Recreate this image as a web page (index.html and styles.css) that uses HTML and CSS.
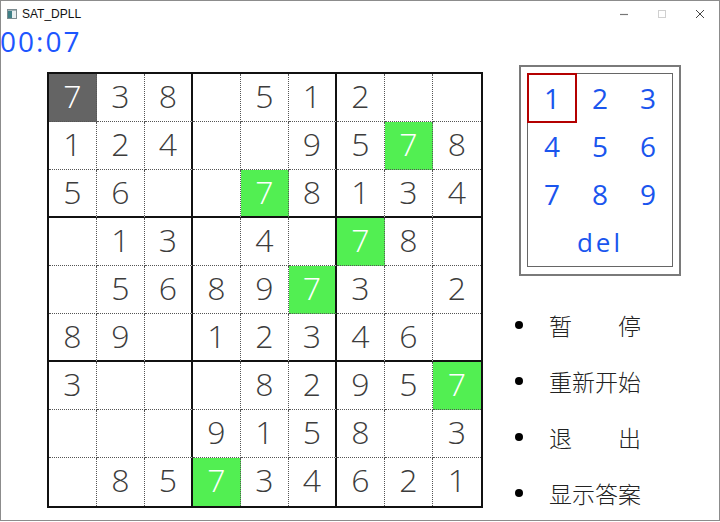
FILE: index.html
```html
<!DOCTYPE html>
<html lang="zh-CN">
<head>
  <meta charset="UTF-8" />
  <title>SAT_DPLL</title>
  <link rel="stylesheet" href="styles.css">
</head>
<body>
  <div class="window">
    <div class="titlebar">
      <svg class="app-icon" width="10" height="10" viewBox="0 0 10 10">
        <rect x="0.5" y="0.5" width="9" height="9" fill="#e8eef0" stroke="#7d8b90" />
        <rect x="1" y="2" width="4" height="7" fill="#3f7f86" />
        <rect x="1" y="1" width="8" height="1" fill="#9fb3b8" />
      </svg>
      <span class="title">SAT_DPLL</span>
      <div class="controls">
        <svg width="10" height="10" viewBox="0 0 10 10"><path d="M1 5.5h8" stroke="#777" stroke-width="1.2" /></svg>
        <svg width="10" height="10" viewBox="0 0 10 10"><rect x="1.5" y="1.5" width="7" height="7" fill="none" stroke="#d0d0d0" /></svg>
        <svg width="10" height="10" viewBox="0 0 10 10"><path d="M1 1l8 8M9 1l-8 8" stroke="#444" stroke-width="1" /></svg>
      </div>
    </div>

    <div class="timer">00:07</div>

    <div class="main">
      <div class="board" id="board"></div>

      <div class="side">
        <div class="pad-frame">
          <div class="pad">
            <div class="key sel">1</div>
            <div class="key">2</div>
            <div class="key">3</div>
            <div class="key">4</div>
            <div class="key">5</div>
            <div class="key">6</div>
            <div class="key">7</div>
            <div class="key">8</div>
            <div class="key">9</div>
            <div class="key del">del</div>
          </div>
        </div>

        <ul class="menu">
          <li>暂　　停</li>
          <li>重新开始</li>
          <li>退　　出</li>
          <li>显示答案</li>
        </ul>
      </div>
    </div>
  </div>

  <script>
    const rows = [
      '7s 3 8 0 5 1 2 0 0',
      '1 2 4 0 0 9 5 7g 8',
      '5 6 0 0 7g 8 1 3 4',
      '0 1 3 0 4 0 7g 8 0',
      '0 5 6 8 9 7g 3 0 2',
      '8 9 0 1 2 3 4 6 0',
      '3 0 0 0 8 2 9 5 7g',
      '0 0 0 9 1 5 8 0 3',
      '0 8 5 7g 3 4 6 2 1'
    ];

    const board = document.getElementById('board');
    rows.forEach((line, r) => {
      line.split(' ').forEach((v, c) => {
        const cell = document.createElement('div');
        cell.className = 'cell';
        if (c === 2 || c === 5) cell.classList.add('box-r');
        if (c === 8) cell.classList.add('last-c');
        if (r === 2 || r === 5) cell.classList.add('box-b');
        if (r === 8) cell.classList.add('last-r');
        if (v.endsWith('g')) cell.classList.add('green');
        if (v.endsWith('s')) cell.classList.add('selected');
        const n = parseInt(v, 10);
        if (n) cell.textContent = n;
        board.appendChild(cell);
      });
    });
  </script>
</body>
</html>
```

FILE: styles.css
```css
* {
  margin: 0;
  padding: 0;
  box-sizing: border-box;
}

body {
  width: 720px;
  height: 522px;
  overflow: hidden;
  background: #fff;
  font-family: 'Open Sans', 'Noto Sans', sans-serif;
}

/* Window frame */
.window {
  width: 720px;
  height: 521px;
  border: 1px solid #8c8c8c;
  background: #fff;
}

.titlebar {
  height: 28px;
  display: flex;
  align-items: center;
  padding-left: 6px;
  padding-bottom: 2px;
}

.app-icon {
  display: block;
}

.title {
  margin-left: 5px;
  font-family: 'Liberation Sans', sans-serif;
  font-size: 12px;
  color: #111;
}

.controls {
  margin-left: auto;
  display: flex;
  gap: 28px;
  padding-right: 14px;
}

.controls svg {
  display: block;
}

/* Timer */
.timer {
  height: 24px;
  line-height: 24px;
  margin-bottom: 12px;
  margin-left: -1px;
  font-size: 28px;
  letter-spacing: 2px;
  color: #1d56ff;
}

/* Main area */
.main {
  display: flex;
  align-items: flex-start;
  padding-left: 46px;
}

/* Sudoku board */
.board {
  margin-top: 7px;
  display: grid;
  grid-template-columns: repeat(9, 48px);
  grid-auto-rows: 48px;
  border: 2px solid #111;
}

.cell {
  border-right: 1px dotted #555;
  border-bottom: 1px dotted #555;
  text-align: center;
  line-height: 44px;
  font-size: 32px;
  font-weight: 300;
  color: #3c3c3c;
}

.cell.box-r { border-right: 2px solid #111; }
.cell.box-b { border-bottom: 2px solid #111; }
.cell.last-c { border-right: none; }
.cell.last-r { border-bottom: none; }

.cell.green {
  background: #52ef52;
  color: #fff;
}

.cell.selected {
  background: #646464;
  color: #fff;
}

/* Side column */
.side {
  margin-left: 36px;
}

.pad-frame {
  width: 162px;
  border: 2px solid #7a7a7a;
  padding: 6px 6px 7px;
}

.pad {
  border: 1px solid #666;
  display: grid;
  grid-template-columns: repeat(3, 48px);
  grid-auto-rows: 48px;
}

.key {
  text-align: center;
  line-height: 48px;
  font-size: 28px;
  color: #1a55ee;
}

.key.sel {
  outline: 2px solid #b40000;
  outline-offset: -1px;
}

.key.del {
  grid-column: span 3;
  font-size: 26px;
  letter-spacing: 3px;
}

/* Menu */
.menu {
  list-style: none;
  margin-top: 21px;
  margin-left: -4px;
}

.menu li {
  height: 56px;
  display: flex;
  align-items: center;
  font-family: 'Noto Sans CJK SC', sans-serif;
  font-size: 23px;
  font-weight: 300;
  color: #222;
}

.menu li::before {
  content: '';
  width: 8px;
  height: 8px;
  border-radius: 50%;
  background: #000;
  margin-right: 26px;
}
```
